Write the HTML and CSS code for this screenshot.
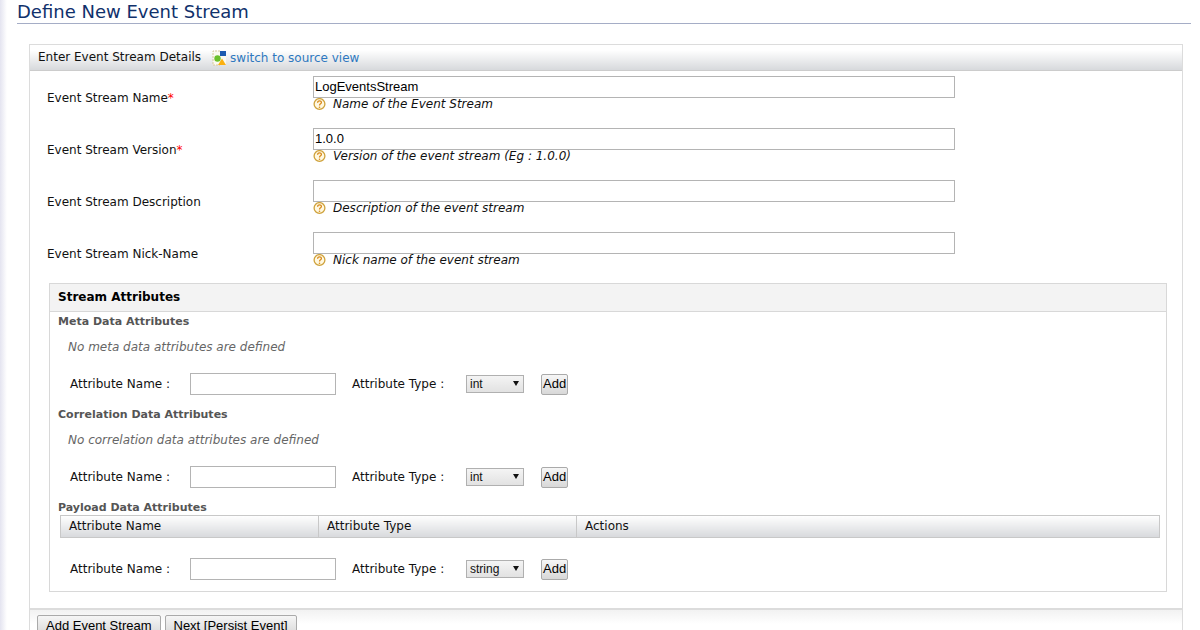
FILE: index.html
```html
<!DOCTYPE html>
<html lang="en">
<head>
    <meta charset="utf-8">
    <title>Define New Event Stream</title>
    <link rel="stylesheet" href="styles.css">
</head>
<body>
    <!-- help icon, used under every field -->
    <svg class="sprite" aria-hidden="true">
        <symbol id="help" viewBox="0 0 13 13">
            <circle cx="6.5" cy="6" r="5.4" fill="#fff8e0" stroke="#cfa23c" stroke-width="1.3"/>
            <path d="M4.6 4.7C4.6 2.2 8.5 2.3 8.4 4.5C8.3 5.9 6.5 5.8 6.5 7.5" fill="none" stroke="#d98a1c" stroke-width="1.3"/>
            <circle cx="6.5" cy="9.2" r="0.8" fill="#d98a1c"/>
        </symbol>
    </svg>

    <div id="middle">
        <h2>Define New Event Stream</h2>
        <form class="panel" onsubmit="return false">
            <div class="panel-head">
                <span>Enter Event Stream Details</span>
                <a href="#source">
                    <svg class="source-icon" viewBox="0 0 16 16">
                        <path d="M1 1H14V15H1Z" fill="#fbfaf0"/>
                        <path d="M8 1H1V15H8" fill="none" stroke="#d8c89a" stroke-dasharray="2 1"/>
                        <rect x="8" y="1" width="6" height="5" fill="#1d5bb0"/>
                        <circle cx="5.5" cy="8.5" r="3.2" fill="#6cc02c"/>
                        <path d="M10 8.5L14 15H6Z" fill="#fbb012"/>
                    </svg>switch to source view</a>
            </div>

            <div class="fields">
                <div class="field">
                    <label for="eventName">Event Stream Name<span class="required">*</span></label>
                    <div class="value">
                        <input type="text" id="eventName" value="LogEventsStream">
                        <div class="hint"><svg><use href="#help"/></svg>Name of the Event Stream</div>
                    </div>
                </div>
                <div class="field">
                    <label for="eventVersion">Event Stream Version<span class="required">*</span></label>
                    <div class="value">
                        <input type="text" id="eventVersion" value="1.0.0">
                        <div class="hint"><svg><use href="#help"/></svg>Version of the event stream (Eg : 1.0.0)</div>
                    </div>
                </div>
                <div class="field">
                    <label for="eventDescription">Event Stream Description</label>
                    <div class="value">
                        <input type="text" id="eventDescription">
                        <div class="hint"><svg><use href="#help"/></svg>Description of the event stream</div>
                    </div>
                </div>
                <div class="field">
                    <label for="eventNick">Event Stream Nick-Name</label>
                    <div class="value">
                        <input type="text" id="eventNick">
                        <div class="hint"><svg><use href="#help"/></svg>Nick name of the event stream</div>
                    </div>
                </div>
            </div>

            <div class="attributes">
                <h3>Stream Attributes</h3>

                <h6>Meta Data Attributes</h6>
                <p class="none">No meta data attributes are defined</p>
                <div class="add-row">
                    <label class="name-label" for="metaName">Attribute Name :</label>
                    <input type="text" id="metaName">
                    <label class="type-label" for="metaType">Attribute Type :</label>
                    <span class="select"><select id="metaType"><option>int</option><option>string</option></select></span>
                    <button type="button">Add</button>
                </div>

                <h6>Correlation Data Attributes</h6>
                <p class="none">No correlation data attributes are defined</p>
                <div class="add-row">
                    <label class="name-label" for="corrName">Attribute Name :</label>
                    <input type="text" id="corrName">
                    <label class="type-label" for="corrType">Attribute Type :</label>
                    <span class="select"><select id="corrType"><option>int</option><option>string</option></select></span>
                    <button type="button">Add</button>
                </div>

                <h6>Payload Data Attributes</h6>
                <table>
                    <thead>
                        <tr>
                            <th class="col">Attribute Name</th>
                            <th class="col">Attribute Type</th>
                            <th>Actions</th>
                        </tr>
                    </thead>
                </table>
                <div class="add-row">
                    <label class="name-label" for="payloadName">Attribute Name :</label>
                    <input type="text" id="payloadName">
                    <label class="type-label" for="payloadType">Attribute Type :</label>
                    <span class="select"><select id="payloadType"><option>string</option><option>int</option></select></span>
                    <button type="button">Add</button>
                </div>
            </div>

            <div class="buttons">
                <button type="button">Add Event Stream</button>
                <button type="button">Next [Persist Event]</button>
            </div>
        </form>
    </div>
</body>
</html>
```

FILE: styles.css
```css
* {
    box-sizing: border-box;
}

html {
    overflow: hidden;
}

body {
    margin: 0;
    background: linear-gradient(to right, #e4e4f0, #fff 7px);
    font-family: "DejaVu Sans", Verdana, sans-serif;
    font-size: 12px;
    line-height: 16px;
    color: #111;
}

.sprite {
    display: none;
}

#middle {
    padding: 0 9px 0 17px;
}

h2 {
    margin: 0 0 20px;
    height: 24px;
    line-height: 23px;
    border-bottom: 1px solid #a5adc6;
    font-size: 18px;
    font-weight: normal;
    color: #10316b;
}

.panel {
    margin: 0 8px 0 12px;
    border: 1px solid #dcdcdc;
}

.panel-head {
    display: flex;
    align-items: center;
    gap: 11px;
    height: 26px;
    padding: 0 8px 1px;
    border-bottom: 1px solid #ccc;
    background: linear-gradient(#fff 20%, #d7d9dc);
}

.panel-head a {
    display: flex;
    align-items: center;
    gap: 2px;
    padding-top: 2px;
    color: #2e78bf;
    text-decoration: none;
}

.source-icon {
    width: 16px;
    height: 16px;
}

.fields {
    padding: 5px 17px 0;
}

.field {
    display: flex;
    height: 52px;
}

.field > label {
    width: 266px;
    padding-top: 14px;
}

.required {
    color: #f00;
}

.value {
    width: 642px;
}

input {
    height: 22px;
    padding: 0 1px 2px;
    border: 1px solid #b4b4b4;
    background: #fff;
    font-family: "Liberation Sans", Arial, sans-serif;
    font-size: 13px;
    color: #000;
}

.value input {
    display: block;
    width: 100%;
}

.hint {
    display: flex;
    gap: 7px;
    line-height: 13px;
    font-style: italic;
}

.hint svg {
    width: 13px;
    height: 13px;
}

.attributes {
    margin: -1px 15px 16px 19px;
    padding-bottom: 11px;
    border: 1px solid #d8d8d8;
}

h3 {
    margin: 0;
    padding: 0 8px;
    line-height: 27px;
    border-bottom: 1px solid #d8d8d8;
    background: #f3f3f3;
    font-size: 12px;
    color: #000;
}

h6 {
    margin: 0;
    padding: 2px 8px 0;
    line-height: 16px;
    font-size: 11px;
    color: #555;
}

.none {
    margin: 9px 18px 17px;
    line-height: 17px;
    font-style: italic;
    color: #666;
}

.add-row {
    display: flex;
    align-items: center;
    height: 22px;
    margin-bottom: 10px;
    padding-left: 20px;
}

.name-label {
    width: 120px;
}

.add-row input {
    width: 146px;
    margin-right: 16px;
}

.type-label {
    width: 114px;
}

/* native arrow is replaced by a small triangle */
.select {
    position: relative;
    margin-right: 17px;
}

.select::after {
    content: "";
    position: absolute;
    right: 5px;
    top: 6px;
    border: 3px solid transparent;
    border-top: 5px solid #111;
    border-bottom: 0;
    pointer-events: none;
}

select {
    display: block;
    width: 58px;
    height: 18px;
    padding: 0 3px;
    border: 1px solid #b0b0b0;
    border-radius: 0;
    appearance: none;
    background: linear-gradient(#f4f4f4, #e2e2e2);
    font-family: "Liberation Sans", Arial, sans-serif;
    font-size: 12px;
    color: #111;
}

button {
    height: 21px;
    padding: 0 1px 1px;
    border: 1px solid #aaa;
    border-radius: 2px;
    background: linear-gradient(#f6f6f6, #d8d8d8);
    font-family: "Liberation Sans", Arial, sans-serif;
    font-size: 13px;
    color: #000;
}

table {
    width: calc(100% - 16px);
    margin: -1px 6px 20px 10px;
    border: 1px solid #c8c8c8;
    border-collapse: collapse;
    table-layout: fixed;
    background: linear-gradient(#fff, #d7d9dc);
}

th {
    height: 22px;
    padding: 0 8px 2px;
    border-left: 1px solid #c8c8c8;
    font-weight: normal;
    text-align: left;
}

.col {
    width: 258px;
}

.attributes .add-row:last-child {
    margin-bottom: 0;
}

.buttons {
    display: flex;
    gap: 4px;
    padding: 5px 7px;
    border-top: 2px solid #dcdcdc;
    background: linear-gradient(#f2f2f2, #fff 14px);
}

.buttons button {
    padding: 0 8px;
}
```
